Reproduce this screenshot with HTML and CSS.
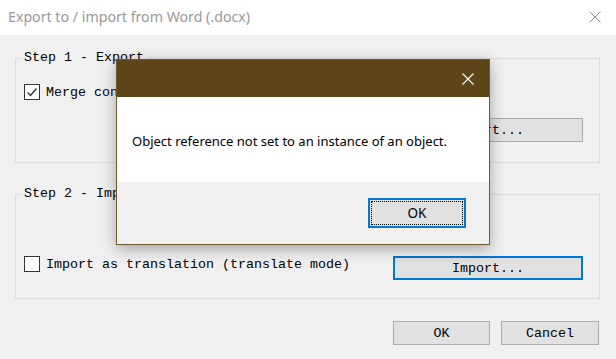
FILE: index.html
```html
<!DOCTYPE html>
<html lang="en">
<head>
<meta charset="utf-8">
<title>Export to / import from Word (.docx)</title>
<link rel="stylesheet" href="styles.css">
</head>
<body>
<div class="window">
  <div class="titlebar">
    <span class="title">Export to / import from Word (.docx)</span>
    <svg class="close" width="12" height="12" viewBox="0 0 12 12"><path d="M0.5 0.5 L11.5 11.5 M11.5 0.5 L0.5 11.5" stroke="#8a8a8a" stroke-width="1" fill="none"/></svg>
  </div>
  <div class="body">
    <section class="group g1">
      <div class="legend">Step 1 - Export</div>
      <div class="check-row">
        <span class="checkbox"><svg width="14" height="14" viewBox="0 0 14 14"><path d="M2.5 7.5 L5.5 10.5 L11.5 3.5" stroke="#333" stroke-width="1.4" fill="none"/></svg></span>
        <span class="check-label">Merge content of all files</span>
      </div>
      <div class="btn-row"><button class="btn wide">Export...</button></div>
    </section>
    <section class="group g2">
      <div class="legend">Step 2 - Import</div>
      <div class="import-row">
        <div class="check-row">
          <span class="checkbox"></span>
          <span class="check-label">Import as translation (translate mode)</span>
        </div>
        <button class="btn wide focused">Import...</button>
      </div>
    </section>
    <div class="footer">
      <button class="btn small">OK</button>
      <button class="btn small cancel">Cancel</button>
    </div>
  </div>

  <div class="modal">
    <div class="modal-title">
      <svg width="12" height="12" viewBox="0 0 12 12"><path d="M0.5 0.5 L11.5 11.5 M11.5 0.5 L0.5 11.5" stroke="#ffffff" stroke-width="1.1" fill="none"/></svg>
    </div>
    <div class="modal-content">Object reference not set to an instance of an object.</div>
    <div class="modal-footer"><button class="modal-ok">OK</button></div>
  </div>
</div>
</body>
</html>
```

FILE: styles.css
```css
* { box-sizing: border-box; }
html, body { margin: 0; padding: 0; }
body {
  width: 616px;
  height: 359px;
  overflow: hidden;
  background: #f0f0f0;
}
.window {
  position: relative;
  width: 616px;
  height: 359px;
  display: flex;
  flex-direction: column;
  font-family: "Liberation Mono", monospace;
  font-size: 13.33px;
  color: #000;
}
.titlebar {
  height: 35px;
  background: #ffffff;
  display: flex;
  align-items: center;
  justify-content: space-between;
  padding: 0 15px 2px 8px;
}
.title {
  font-family: "Noto Sans", sans-serif;
  font-size: 14.2px;
  color: #999999;
}
.body {
  flex: 1;
  background: #f0f0f0;
  display: flex;
  flex-direction: column;
  padding-top: 23px;
}
.group {
  border: 1px solid #dcdcdc;
  margin: 0 16px 0 15px;
  padding: 0 16px 0 8px;
}
.g1 { height: 105px; }
.g2 { height: 105px; margin-top: 31px; }
.legend {
  width: max-content;
  height: 16px;
  line-height: 16px;
  margin: -9px 0 0 -2px;
  padding: 0 2px;
  background: #f0f0f0;
}
.check-row {
  display: flex;
  align-items: center;
  gap: 6px;
  height: 16px;
}
.g1 .check-row { margin-top: 18px; }
.checkbox {
  width: 16px;
  height: 16px;
  border: 1px solid #333333;
  background: #ffffff;
  display: flex;
  align-items: center;
  justify-content: center;
  flex: none;
}
.check-label { line-height: 16px; white-space: nowrap; padding-top: 1px; }
.btn-row {
  display: flex;
  justify-content: flex-end;
  margin-top: 18px;
}
.btn {
  font-family: "Liberation Mono", monospace;
  font-size: 13.33px;
  color: #000;
  background: #e1e1e1;
  border: 1px solid #adadad;
  height: 24px;
  padding: 1px 0 0;
  margin: 0;
}
.wide { width: 190px; }
.focused { border: 2px solid #0078d7; }
.import-row {
  display: flex;
  justify-content: space-between;
  align-items: flex-start;
  margin-top: 54px;
}
.footer {
  display: flex;
  justify-content: flex-end;
  gap: 11px;
  padding-right: 17px;
  margin-top: 22px;
}
.small { width: 97px; }
.cancel { width: 98px; }

.modal {
  position: absolute;
  left: 116px;
  top: 59px;
  width: 374px;
  height: 186px;
  border: 1px solid #6e5a2c;
  background: #ffffff;
  display: flex;
  flex-direction: column;
  box-shadow: 0 4px 14px rgba(0, 0, 0, 0.32);
  font-family: "Noto Sans", sans-serif;
}
.modal-title {
  height: 37px;
  background: #5c4619;
  display: flex;
  align-items: center;
  justify-content: flex-end;
  padding-right: 15px;
}
.modal-content {
  height: 85px;
  display: flex;
  align-items: center;
  padding: 2px 0 0 15px;
  font-size: 13px;
  color: #000;
}
.modal-footer {
  flex: 1;
  background: #f0f0f0;
  display: flex;
  justify-content: flex-end;
  align-items: flex-start;
  padding: 16px 23px 0 0;
}
.modal-ok {
  width: 98px;
  height: 30px;
  background: #e1e1e1;
  border: 2px solid #0078d7;
  outline: 1px dotted #000;
  outline-offset: -4px;
  font-family: "Noto Sans", sans-serif;
  font-size: 13.5px;
  color: #000;
  padding: 0;
}
```
